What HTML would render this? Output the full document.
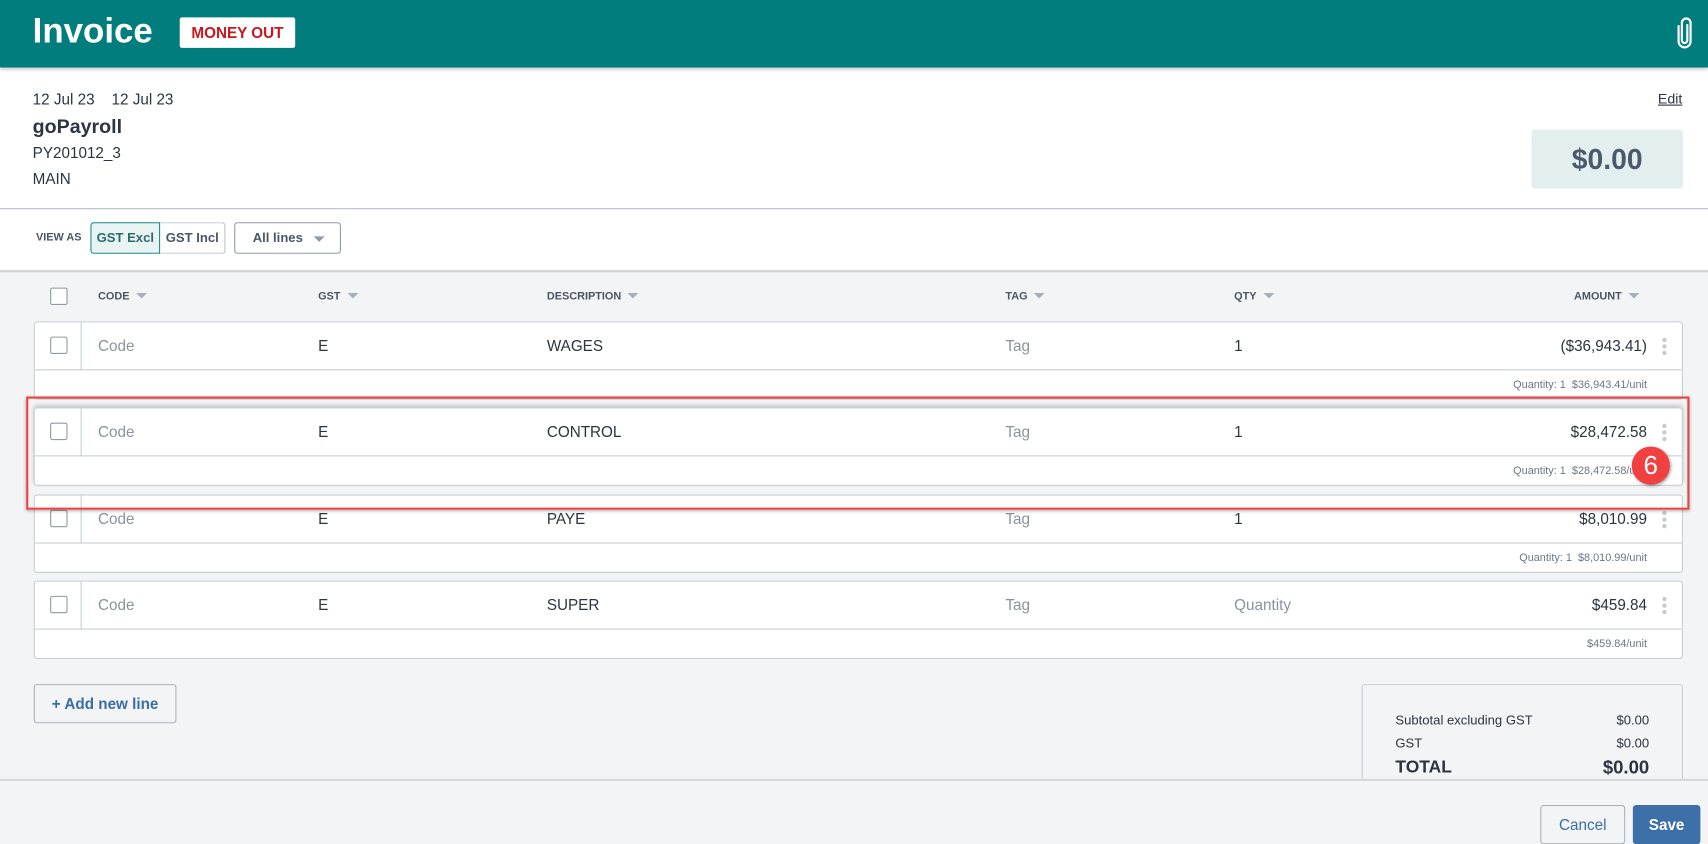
<!DOCTYPE html>
<html><head><style>
*{box-sizing:border-box;margin:0;padding:0}
body{width:1708px;height:842px;overflow:hidden;background:#f3f4f6;font-family:"Liberation Sans",sans-serif;color:#2b3440;position:relative}
#w{position:absolute;left:0;top:0;width:1568px;height:773px;transform:scale(1.08929);transform-origin:0 0}
.a{position:absolute}
.hdr{left:0;top:0;width:1568px;height:62px;background:#007d7c;box-shadow:0 2px 4px rgba(0,0,0,.25);z-index:2}
.top{left:0;top:62px;width:1568px;height:130px;background:#fff;border-bottom:1px solid #bcc3ca}
.view{left:0;top:193px;width:1568px;height:57px;background:#fff;border-bottom:2px solid #cfd3d8}
.hd{font-size:10px;font-weight:bold;color:#4a5666;top:267px}
.hd i{display:inline-block;width:0;height:0;border-left:5px solid transparent;border-right:5px solid transparent;border-top:5px solid #a7afb8;margin-left:6px;vertical-align:1px}
.card{left:31px;width:1514px;height:72px;background:#fff;border:1px solid #c8ced5;border-radius:3px}
.card .m{position:absolute;left:0;top:0;width:100%;height:44px;border-bottom:1px solid #c8ced5;font-size:14px}
.card .m span{position:absolute;top:13px}
.cb{position:absolute;width:16px;height:16px;border:1px solid #8f98a3;border-radius:2px;background:#fff}
.vd{position:absolute;left:42px;top:0;width:1px;height:44px;background:#c8ced5}
.g{color:#8a939d}
.sub{position:absolute;right:32px;top:52px;font-size:10px;color:#6b7684}
.dots{position:absolute;right:14px;top:14px;width:4px}
.dots b{display:block;width:4px;height:4px;border-radius:2px;background:#c5cbd1;margin-bottom:2px}
</style></head><body><div id="w">
<div class="a hdr">
 <div class="a" style="left:30px;top:10px;font-size:32px;font-weight:bold;color:#fff">Invoice</div>
 <div class="a" style="left:165px;top:16px;width:106px;height:28px;background:#fff;border-radius:2px;color:#c8171e;font-weight:bold;font-size:14px;text-align:center;line-height:28px">MONEY OUT</div>
 <svg class="a" style="left:1538px;top:14px" width="18" height="32" viewBox="0 0 18 32"><path d="M11 9 V23 a2.5 2.5 0 0 1 -5 0 V7 a4 4 0 0 1 8 0 V24 a5.5 5.5 0 0 1 -11 0 V10" fill="none" stroke="#fff" stroke-width="2" stroke-linecap="round"/></svg>
</div>
<div class="a top">
 <div class="a" style="left:30px;top:21px;font-size:14px">12 Jul 23&nbsp;&nbsp;&nbsp;&nbsp;12 Jul 23</div>
 <div class="a" style="left:30px;top:44px;font-size:18px;font-weight:bold">goPayroll</div>
 <div class="a" style="left:30px;top:70px;font-size:14px">PY201012_3</div>
 <div class="a" style="left:30px;top:94px;font-size:14px">MAIN</div>
 <div class="a" style="left:1522px;top:21px;font-size:13px;text-decoration:underline">Edit</div>
 <div class="a" style="left:1406px;top:57px;width:139px;height:54px;background:#e3eeee;border-radius:3px;font-size:26px;font-weight:bold;color:#4a5a6c;text-align:center;line-height:54px">$0.00</div>
</div>
<div class="a view">
 <div class="a" style="left:33px;top:20px;font-size:10px;font-weight:bold;color:#4a5666">VIEW AS</div>
 <div class="a" style="left:83px;top:11px;width:64px;height:29px;border:1px solid #1a8a88;background:#e8f3f3;border-radius:3px 0 0 3px;font-size:12px;font-weight:bold;color:#2e6a6a;text-align:center;line-height:27px">GST Excl</div>
 <div class="a" style="left:147px;top:11px;width:60px;height:29px;border:1px solid #b9c1c9;border-left:none;border-radius:0 3px 3px 0;font-size:12px;font-weight:bold;color:#4a5666;text-align:center;line-height:27px">GST Incl</div>
 <div class="a" style="left:215px;top:11px;width:98px;height:29px;border:1px solid #8f9aa5;border-radius:3px;font-size:12px;font-weight:bold;color:#4a5666;line-height:27px;padding-left:16px">All lines<i style="position:absolute;left:72px;top:12px;border-left:5px solid transparent;border-right:5px solid transparent;border-top:5px solid #8f98a3"></i></div>
</div>
<div class="cb" style="left:46px;top:264px"></div>
<div class="a hd" style="left:90px">CODE<i></i></div>
<div class="a hd" style="left:292px">GST<i></i></div>
<div class="a hd" style="left:502px">DESCRIPTION<i></i></div>
<div class="a hd" style="left:923px">TAG<i></i></div>
<div class="a hd" style="left:1133px">QTY<i></i></div>
<div class="a hd" style="left:1445px">AMOUNT<i></i></div>

<div class="a card" style="top:295px"><div class="m"><div class="cb" style="left:14px;top:13px"></div><div class="vd"></div><span class="g" style="left:58px">Code</span><span style="left:260px">E</span><span style="left:470px">WAGES</span><span class="g" style="left:891px">Tag</span><span style="left:1101px">1</span><span style="right:32px">($36,943.41)</span><div class="dots"><b></b><b></b><b></b></div></div><div class="sub">Quantity: 1&nbsp;&nbsp;$36,943.41/unit</div></div>
<div class="a card" style="top:374px;box-shadow:0 -2px 4px rgba(0,0,0,.18)"><div class="m"><div class="cb" style="left:14px;top:13px"></div><div class="vd"></div><span class="g" style="left:58px">Code</span><span style="left:260px">E</span><span style="left:470px">CONTROL</span><span class="g" style="left:891px">Tag</span><span style="left:1101px">1</span><span style="right:32px">$28,472.58</span><div class="dots"><b></b><b></b><b></b></div></div><div class="sub">Quantity: 1&nbsp;&nbsp;$28,472.58/unit</div></div>
<div class="a card" style="top:454px"><div class="m"><div class="cb" style="left:14px;top:13px"></div><div class="vd"></div><span class="g" style="left:58px">Code</span><span style="left:260px">E</span><span style="left:470px">PAYE</span><span class="g" style="left:891px">Tag</span><span style="left:1101px">1</span><span style="right:32px">$8,010.99</span><div class="dots"><b></b><b></b><b></b></div></div><div class="sub">Quantity: 1&nbsp;&nbsp;$8,010.99/unit</div></div>
<div class="a card" style="top:533px"><div class="m"><div class="cb" style="left:14px;top:13px"></div><div class="vd"></div><span class="g" style="left:58px">Code</span><span style="left:260px">E</span><span style="left:470px">SUPER</span><span class="g" style="left:891px">Tag</span><span class="g" style="left:1101px">Quantity</span><span style="right:32px">$459.84</span><div class="dots"><b></b><b></b><b></b></div></div><div class="sub">$459.84/unit</div></div>

<div class="a" style="left:24px;top:364px;width:1527px;height:104px;border:2px solid #e94545;box-shadow:0 1px 3px rgba(0,0,0,.3)"></div>
<div class="a" style="left:1498px;top:410px;width:35px;height:35px;border-radius:50%;background:#f04040;color:#fff;font-size:24px;text-align:center;line-height:35px;box-shadow:1px 1px 3px rgba(0,0,0,.4)">6</div>

<div class="a" style="left:31px;top:628px;width:131px;height:36px;border:1px solid #aab3bc;border-radius:3px;background:#f3f4f6;font-size:14px;font-weight:bold;color:#3a6ea5;text-align:center;line-height:34px">+ Add new line</div>
<div class="a" style="left:1250px;top:628px;width:295px;height:100px;border:1px solid #c8ced5;border-radius:3px;font-size:12px">
 <div class="a" style="left:30px;top:25px">Subtotal excluding GST</div><div class="a" style="right:30px;top:25px">$0.00</div>
 <div class="a" style="left:30px;top:46px">GST</div><div class="a" style="right:30px;top:46px">$0.00</div>
 <div class="a" style="left:30px;top:67px;font-size:16px;font-weight:bold">TOTAL</div><div class="a" style="right:30px;top:66px;font-size:17px;font-weight:bold">$0.00</div>
</div>
<div class="a" style="left:0;top:715px;width:1568px;height:60px;background:#f3f4f6;border-top:2px solid #d5d9de">
 <div class="a" style="left:1414px;top:22px;width:78px;height:36px;border:1px solid #aab3bc;border-radius:3px;font-size:14px;color:#3a6ea5;text-align:center;line-height:34px">Cancel</div>
 <div class="a" style="left:1499px;top:22px;width:62px;height:36px;background:#3d70a8;border-radius:3px;font-size:14px;font-weight:bold;color:#fff;text-align:center;line-height:36px">Save</div>
</div>
</div></body></html>
